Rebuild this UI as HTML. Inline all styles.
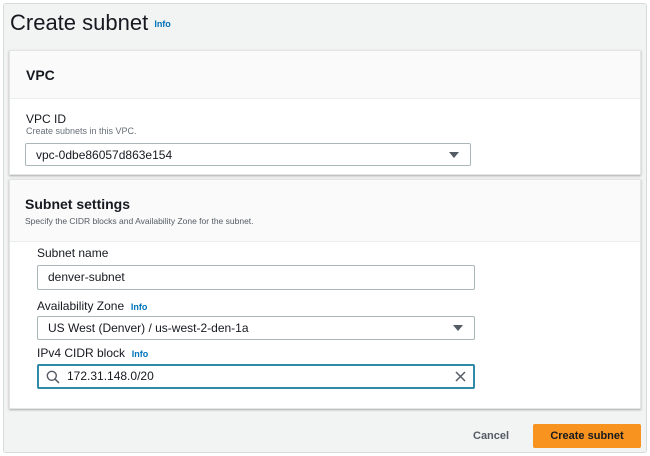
<!DOCTYPE html>
<html><head><style>
*{box-sizing:border-box;margin:0;padding:0}
body{width:650px;height:456px;background:#fff;font-family:"Liberation Sans",sans-serif;color:#16191f;position:relative;overflow:hidden}
.outer{position:absolute;left:3px;top:3px;width:644px;height:450px;background:#f2f3f3;border:1px solid #d5dbdb;border-radius:3px}
.abs{position:absolute}
.panel{position:absolute;left:9px;width:632px;background:#fff;box-shadow:0 1px 2px rgba(0,0,0,.3);border:1px solid #e4e6e6}
.hdr{background:#fafafa;border-bottom:1px solid #eaeded}
.info{color:#0073bb;font-weight:bold;font-size:9px}
.inp{position:absolute;border:1px solid #aab7b8;border-radius:2px;background:#fff;font-size:12px;padding-left:10px;line-height:22px}
.lbl{position:absolute;font-size:12px;color:#16191f}
.tri{position:absolute;right:11px;top:8px;width:0;height:0;border-left:5px solid transparent;border-right:5px solid transparent;border-top:6px solid #545b64}
</style></head><body>
<div class="outer"></div>
<div class="abs" style="left:10px;top:10px;font-size:22px;color:#16191f">Create subnet <span class="info" style="font-size:9px;vertical-align:middle">Info</span></div>

<div class="panel" style="top:50px;height:125px">
 <div class="hdr" style="height:48px;padding:16px 0 0 16px;font-weight:bold;font-size:14px">VPC</div>
 <div class="lbl" style="left:16px;top:61px">VPC ID</div>
 <div class="lbl" style="left:16px;top:75px;font-size:9px;color:#687078">Create subnets in this VPC.</div>
 <div class="inp" style="left:15px;top:92px;width:446px;height:23px">vpc-0dbe86057d863e154<div class="tri"></div></div>
</div>

<div class="panel" style="top:179px;height:230px">
 <div class="hdr" style="height:62px;padding:16px 0 0 15px"><div style="font-weight:bold;font-size:14px">Subnet settings</div><div style="font-size:8.5px;color:#545b64;margin-top:4px">Specify the CIDR blocks and Availability Zone for the subnet.</div></div>
 <div class="lbl" style="left:27px;top:66px">Subnet name</div>
 <div class="inp" style="left:27px;top:85px;width:438px;height:25px;line-height:23px">denver-subnet</div>
 <div class="lbl" style="left:27px;top:119px">Availability Zone &nbsp;<span class="info">Info</span></div>
 <div class="inp" style="left:27px;top:136px;width:438px;height:24px">US West (Denver) / us-west-2-den-1a<div class="tri"></div></div>
 <div class="lbl" style="left:27px;top:166px">IPv4 CIDR block &nbsp;<span class="info">Info</span></div>
 <div class="inp" style="left:27px;top:184px;width:438px;height:25px;border:2px solid #2e8aa5;padding-left:28px;line-height:21px">172.31.148.0/20
  <svg class="abs" style="left:7px;top:4px" width="14" height="14" viewBox="0 0 14 14"><circle cx="5.8" cy="5.8" r="4.5" fill="none" stroke="#545b64" stroke-width="1.4"/><path d="M9 9L13 13" stroke="#545b64" stroke-width="1.5"/></svg>
  <svg class="abs" style="right:7px;top:5px" width="11" height="11" viewBox="0 0 11 11"><path d="M1 1L10 10M10 1L1 10" stroke="#545b64" stroke-width="1.5"/></svg>
 </div>
</div>

<div class="abs" style="left:473px;top:430px;font-size:11px;font-weight:bold;color:#545b64">Cancel</div>
<div class="abs" style="left:533px;top:424px;width:108px;height:24px;background:#f7931e;border-radius:2px;font-size:11px;font-weight:bold;color:#16191f;text-align:center;line-height:24px">Create subnet</div>
</body></html>
